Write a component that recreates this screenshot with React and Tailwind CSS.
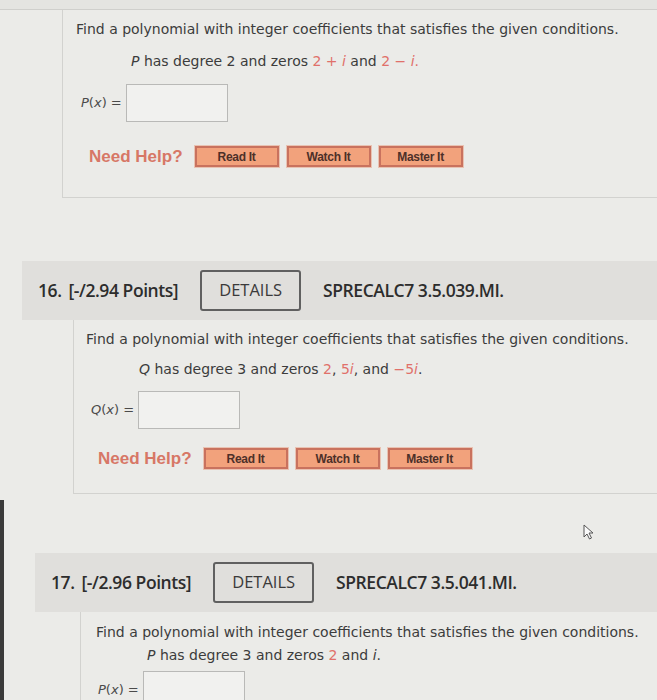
import React from "react";

const body = { fontFamily: "'DejaVu Sans', Verdana, sans-serif" };
const head = { fontFamily: "'Open Sans', 'Liberation Sans', sans-serif" };
const btn = { fontFamily: "'Liberation Sans', Arial, sans-serif" };

function HelpRow() {
  return (
    <div className="flex items-center">
      <span className="text-[17px] font-bold text-[#d77766] mr-3" style={btn}>
        Need Help?
      </span>
      {["Read It", "Watch It", "Master It"].map((label) => (
        <span
          key={label}
          className="mr-[8px] w-[84px] h-[21px] flex items-center justify-center bg-[#f2a27c] border-2 border-[#c9725e] outline outline-1 outline-[#e9c2b2] text-[12px] font-bold text-[#4d3029] tracking-tight"
          style={btn}
        >
          {label}
        </span>
      ))}
    </div>
  );
}

function Header({ num, points, code }) {
  return (
    <div className="h-[59px] bg-[#e0dfdc] flex items-center pl-4 text-[#2d2d2d]" style={head}>
      <span className="text-[17.5px] font-semibold tracking-tight">
        <span className="mr-[7px]">{num}.</span>[-/{points} Points]
      </span>
      <span className="ml-[22px] h-[41px] px-[17px] flex items-center border-2 border-[#606060] rounded-[3px] text-[16.5px] text-[#3a3a3a]">
        DETAILS
      </span>
      <span className="ml-[22px] text-[17.5px] font-semibold tracking-tight">{code}</span>
    </div>
  );
}

function Answer({ label }) {
  return (
    <div className="flex items-center text-[13px] text-[#4a4a4a]">
      <span className="mr-1">
        <i>{label}</i>(<i>x</i>) =
      </span>
      <span className="w-[102px] h-[38px] border border-[#b9b9b7] bg-[#f1f1ef]" />
    </div>
  );
}

const Red = ({ children }) => <span className="text-[#e0706a]">{children}</span>;

export default function App() {
  return (
    <div className="w-[657px] h-[700px] overflow-hidden bg-[#ebebe8] relative" style={body}>
      <div className="h-[10px] border-b border-[#cfcfcc] bg-[#e4e4e1]" />

      {/* question 15, tail */}
      <div className="ml-[62px] h-[188px] border-l border-b border-[#d2d2cf] pl-[13px] pt-[9px] text-[#3c3c3c]">
        <p className="text-[14px]">Find a polynomial with integer coefficients that satisfies the given conditions.</p>
        <p className="text-[14px] mt-[11px] ml-[55px]">
          <i>P</i> has degree 2 and zeros <Red>2 + <i>i</i></Red> and <Red>2 − <i>i</i>.</Red>
        </p>
        <div className="mt-[12px] ml-[5px]">
          <Answer label="P" />
        </div>
        <div className="mt-[22px] ml-[13px]">
          <HelpRow />
        </div>
      </div>

      {/* question 16 */}
      <div className="mt-[63px] ml-[22px]">
        <Header num="16" points="2.94" code="SPRECALC7 3.5.039.MI." />
        <div className="ml-[51px] h-[174px] border-l border-b border-[#d2d2cf] pl-[12px] pt-[9px] text-[#3c3c3c]">
          <p className="text-[14px]">Find a polynomial with integer coefficients that satisfies the given conditions.</p>
          <p className="text-[14px] mt-[9px] ml-[53px]">
            <i>Q</i> has degree 3 and zeros <Red>2</Red>, <Red>5<i>i</i></Red>, and <Red>−5<i>i</i></Red>.
          </p>
          <div className="mt-[11px] ml-[5px]">
            <Answer label="Q" />
          </div>
          <div className="mt-[17px] ml-[12px]">
            <HelpRow />
          </div>
        </div>
      </div>

      {/* pointer */}
      <svg className="absolute left-[582px] top-[524px]" width="14" height="16" viewBox="0 0 14 16">
        <path d="M2 1 L2 13 L5 10 L7.5 15 L9.5 14 L7 9 L11 9 Z" fill="#fafafa" stroke="#555" strokeWidth="1" />
      </svg>

      {/* question 17 */}
      <div className="mt-[59px] ml-[35px]">
        <Header num="17" points="2.96" code="SPRECALC7 3.5.041.MI." />
        <div className="ml-[45px] h-[120px] border-l border-[#d2d2cf] pl-[15px] pt-[10px] text-[#3c3c3c]">
          <p className="text-[14px]">Find a polynomial with integer coefficients that satisfies the given conditions.</p>
          <p className="text-[14px] mt-[2px] ml-[51px]">
            <i>P</i> has degree 3 and zeros <Red>2</Red> and <i>i</i>.
          </p>
          <div className="mt-[5px] ml-[2px]">
            <Answer label="P" />
          </div>
        </div>
      </div>

      <div className="absolute left-0 top-[500px] w-[4px] h-[200px] bg-[#3a3a3a]" />
    </div>
  );
}
